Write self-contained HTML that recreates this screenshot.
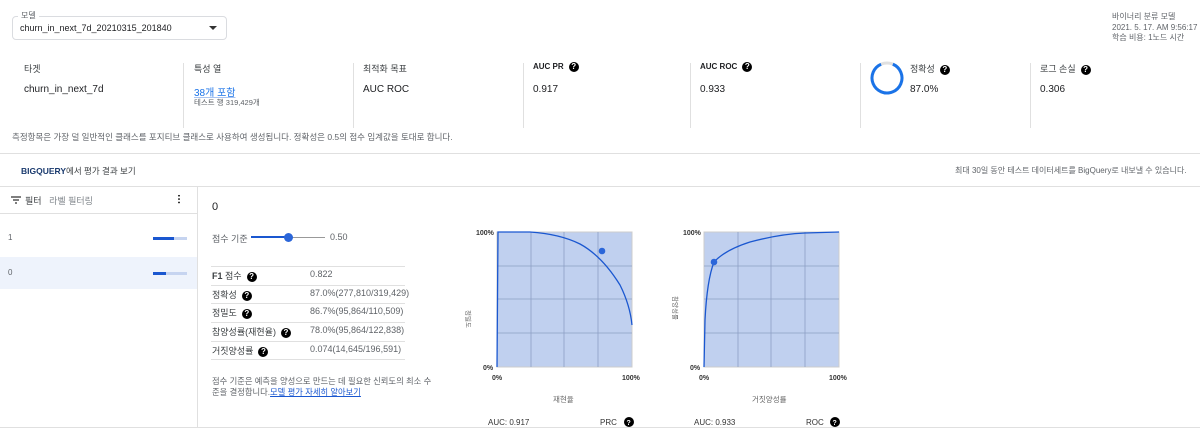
<!DOCTYPE html>
<html><head><meta charset="utf-8"><style>
*{margin:0;padding:0;box-sizing:border-box}
body{width:1200px;height:431px;background:#fff;font-family:"Liberation Sans","Noto Sans CJK KR",sans-serif;color:#3c4043;position:relative;overflow:hidden;font-size:9px}
.a{position:absolute;white-space:nowrap}
.g{color:#5f6368}
.q{display:inline-block;width:10px;height:10px;border-radius:50%;background:#000;color:#fff;font-size:8px;font-weight:bold;text-align:center;line-height:10px;vertical-align:middle;margin-left:5px}
.vd{position:absolute;width:1px;background:#e0e0e0;top:63px;height:65px}
.hl{position:absolute;height:1px;background:#e0e0e0}
.lbl{font-size:9px;top:62px}
.val{font-size:10px;top:84px;color:#202124}
.tr{font-size:9px}
</style></head><body>
<div class="a" style="left:12px;top:16px;width:215px;height:24px;border:1px solid #dadce0;border-radius:4px"></div>
<div class="a g" style="left:18px;top:10px;background:#fff;padding:0 3px;font-size:8px">모델</div>
<div class="a" style="left:20px;top:23px;font-size:9px;color:#202124">churn_in_next_7d_20210315_201840</div>
<div class="a" style="left:209px;top:26px;width:0;height:0;border-left:4px solid transparent;border-right:4px solid transparent;border-top:4px solid #333"></div>
<div class="a g" style="left:1112px;top:12px;font-size:8px;line-height:10.5px">바이너리 분류 모델<br>2021. 5. 17. AM 9:56:17<br>학습 비용: 1노드 시간</div>

<div class="vd" style="left:183px"></div><div class="vd" style="left:353px"></div><div class="vd" style="left:523px"></div><div class="vd" style="left:690px"></div><div class="vd" style="left:860px"></div><div class="vd" style="left:1030px"></div>
<div class="a lbl" style="left:24px">타겟</div><div class="a val" style="left:24px">churn_in_next_7d</div>
<div class="a lbl" style="left:194px">특성 열</div><div class="a val" style="left:194px;color:#1a73e8;text-decoration:underline;text-decoration-color:#aac4f0">38개 포함</div><div class="a g" style="left:194px;top:97px;font-size:7.5px">테스트 행 319,429개</div>
<div class="a lbl" style="left:363px">최적화 목표</div><div class="a val" style="left:363px">AUC ROC</div>
<div class="a lbl" style="left:533px;font-weight:bold;font-size:8px;color:#202124">AUC PR<span class="q">?</span></div><div class="a val" style="left:533px">0.917</div>
<div class="a lbl" style="left:700px;font-weight:bold;font-size:8px;color:#202124">AUC ROC<span class="q">?</span></div><div class="a val" style="left:700px">0.933</div>
<svg class="a" style="left:869px;top:60px" width="36" height="36"><circle cx="18" cy="18" r="15" fill="none" stroke="#e0e0e0" stroke-width="3"/><circle cx="18" cy="18" r="15" fill="none" stroke="#1a73e8" stroke-width="3" stroke-dasharray="82 94.2" transform="rotate(-67 18 18)"/></svg>
<div class="a lbl" style="left:910px">정확성<span class="q">?</span></div><div class="a val" style="left:910px">87.0%</div>
<div class="a lbl" style="left:1040px">로그 손실<span class="q">?</span></div><div class="a val" style="left:1040px">0.306</div>
<div class="a g" style="left:12px;top:131px;font-size:8.5px">측정항목은 가장 덜 일반적인 클래스를 포지티브 클래스로 사용하여 생성됩니다. 정확성은 0.5의 점수 임계값을 토대로 합니다.</div>
<div class="hl" style="left:0;top:153px;width:1200px"></div>
<div class="a" style="left:21px;top:165px;font-size:8.5px"><b style="color:#1a3a6e">BIGQUERY</b>에서 평가 결과 보기</div>
<div class="a g" style="left:955px;top:165px;font-size:8px">최대 30일 동안 테스트 데이터세트를 BigQuery로 내보낼 수 있습니다.</div>
<div class="hl" style="left:0;top:186px;width:1200px"></div>
<div class="hl" style="left:0;top:427px;width:1200px"></div>
<div class="a" style="left:197px;top:186px;width:1px;height:241px;background:#e0e0e0"></div>
<svg class="a" style="left:11px;top:196px" width="10" height="8"><path d="M0 1h10M2 4h6M4 7h2" stroke="#333" stroke-width="1.3"/></svg>
<div class="a" style="left:25px;top:194px;font-size:9px">필터 <span class="g" style="margin-left:5px;color:#80868b">라벨 필터링</span></div>
<div class="a" style="left:178px;top:194px;width:2px;height:10px;background:radial-gradient(circle,#333 0.9px,transparent 1px) 0 0/2px 3.4px"></div>
<div class="hl" style="left:0;top:213px;width:197px"></div>
<div class="a g" style="left:8px;top:233px;font-size:8px">1</div>
<div class="a" style="left:153px;top:237px;width:34px;height:3px;background:#c6d4f0"><div style="width:21px;height:3px;background:#1a57d0"></div></div>
<div class="a" style="left:0;top:257px;width:197px;height:32px;background:#eef3fc"></div>
<div class="a g" style="left:8px;top:268px;font-size:8px">0</div>
<div class="a" style="left:153px;top:272px;width:34px;height:3px;background:#c6d4f0"><div style="width:13px;height:3px;background:#1a57d0"></div></div>

<div class="a" style="left:212px;top:201px;font-size:11px;color:#202124">0</div>
<div class="a g" style="left:212px;top:232px;font-size:9px">점수 기준</div>
<div class="a" style="left:251px;top:237px;width:74px;height:1px;background:#999"></div>
<div class="a" style="left:251px;top:236px;width:37px;height:2px;background:#1a57d0"></div>
<div class="a" style="left:284px;top:233px;width:9px;height:9px;border-radius:50%;background:#2b66d9"></div>
<div class="a g" style="left:330px;top:232px;font-size:9px">0.50</div>
<div class="hl" style="left:211px;top:266px;width:194px"></div>
<div class="hl" style="left:211px;top:285px;width:194px"></div>
<div class="hl" style="left:211px;top:303px;width:194px"></div>
<div class="hl" style="left:211px;top:322px;width:194px"></div>
<div class="hl" style="left:211px;top:341px;width:194px"></div>
<div class="hl" style="left:211px;top:359px;width:194px"></div>
<div class="a tr" style="left:212px;top:269px"><b>F1</b> 점수<span class="q">?</span></div><div class="a g tr" style="left:310px;top:269px">0.822</div>
<div class="a tr" style="left:212px;top:288px">정확성<span class="q">?</span></div><div class="a g tr" style="left:310px;top:288px">87.0%(277,810/319,429)</div>
<div class="a tr" style="left:212px;top:306px">정밀도<span class="q">?</span></div><div class="a g tr" style="left:310px;top:306px">86.7%(95,864/110,509)</div>
<div class="a tr" style="left:212px;top:325px">참양성률(재현율)<span class="q">?</span></div><div class="a g tr" style="left:310px;top:325px">78.0%(95,864/122,838)</div>
<div class="a tr" style="left:212px;top:344px">거짓양성률<span class="q">?</span></div><div class="a g tr" style="left:310px;top:344px">0.074(14,645/196,591)</div>
<div class="a g" style="left:212px;top:376px;font-size:8.3px;line-height:11px">점수 기준은 예측을 양성으로 만드는 데 필요한 신뢰도의 최소 수<br>준을 결정합니다.<span style="color:#1a57d0;text-decoration:underline">모델 평가 자세히 알아보기</span></div>

<svg class="a" style="left:460px;top:220px" width="400" height="211" font-family="Liberation Sans, Noto Sans CJK KR, sans-serif" font-size="7">
<g>
<rect x="37" y="12" width="135" height="135" fill="#c0d0ef" stroke="#ccc"/>
<path d="M71 12V147M104 12V147M138 12V147M37 46H172M37 79H172M37 113H172" stroke="#8c9ec4" stroke-width="0.8"/>
<path d="M37 147L38 12L70 12Q100 14 120 24Q142 36 160 65Q170 85 172 105" fill="none" stroke="#1a57d0" stroke-width="1.3"/>
<circle cx="142" cy="31" r="3.3" fill="#2b66d9"/>
<text x="16" y="15" fill="#333" font-weight="bold">100%</text><text x="23" y="150" fill="#333" font-weight="bold">0%</text>
<text x="32" y="160" fill="#333" font-weight="bold">0%</text><text x="162" y="160" fill="#333" font-weight="bold">100%</text>
<text x="93" y="182" fill="#666" font-size="7.5">재현율</text>
<text transform="translate(6 90) rotate(90)" fill="#666" font-size="6.5">정밀도</text>
<text x="28" y="205" fill="#333" font-size="8">AUC: 0.917</text><text x="140" y="205" fill="#333" font-size="8">PRC</text>
<circle cx="169" cy="202" r="5" fill="#000"/><text x="166.5" y="205" fill="#fff" font-size="7" font-weight="bold">?</text>
</g>
<g>
<rect x="244" y="12" width="135" height="135" fill="#c0d0ef" stroke="#ccc"/>
<path d="M278 12V147M311 12V147M345 12V147M244 46H379M244 79H379M244 113H379" stroke="#8c9ec4" stroke-width="0.8"/>
<path d="M244 147L245 100Q247 60 254 42Q265 30 290 22Q320 14 345 13L379 12" fill="none" stroke="#1a57d0" stroke-width="1.3"/>
<circle cx="254" cy="42" r="3.3" fill="#2b66d9"/>
<text x="223" y="15" fill="#333" font-weight="bold">100%</text><text x="230" y="150" fill="#333" font-weight="bold">0%</text>
<text x="239" y="160" fill="#333" font-weight="bold">0%</text><text x="369" y="160" fill="#333" font-weight="bold">100%</text>
<text x="292" y="182" fill="#666" font-size="7.5">거짓양성률</text>
<text transform="translate(213 76) rotate(90)" fill="#666" font-size="6.5">참양성률</text>
<text x="234" y="205" fill="#333" font-size="8">AUC: 0.933</text><text x="346" y="205" fill="#333" font-size="8">ROC</text>
<circle cx="375" cy="202" r="5" fill="#000"/><text x="372.5" y="205" fill="#fff" font-size="7" font-weight="bold">?</text>
</g>
</svg>
</body></html>
